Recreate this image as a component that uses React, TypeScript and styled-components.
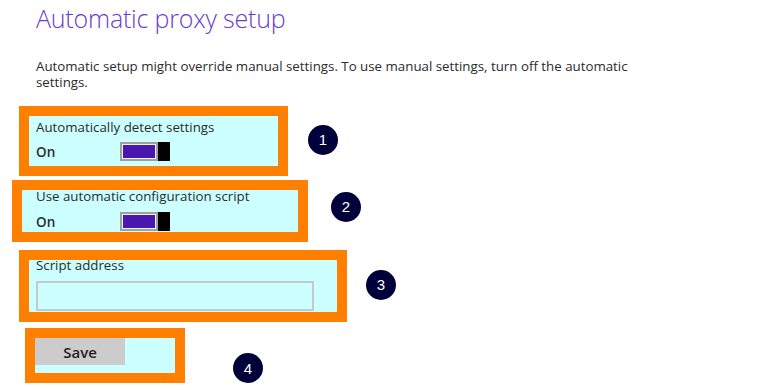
import React from 'react';
import styled, { createGlobalStyle } from 'styled-components';

const colors = {
    orange: '#ff8000',
    cyan: '#ccffff',
    purple: '#6a3dcc',
    toggle: '#4a16b0',
    text: '#2b2b2b',
    badge: '#00003a',
    grey: '#c8c8c8',
};

const GlobalStyle = createGlobalStyle`
    html, body {
        margin: 0;
        padding: 0;
        background: #ffffff;
    }
    body {
        font-family: "Open Sans", "Liberation Sans", sans-serif;
        color: ${colors.text};
    }
`

const Page = styled.div`
    width: 768px;
    height: 391px;
    overflow: hidden;
    display: flex;
    flex-direction: column;
`

const Title = styled.h1`
    margin: 3px 0 0 36px;
    font-size: 25px;
    font-weight: 300;
    line-height: 31px;
    color: ${colors.purple};
    letter-spacing: -0.2px;
`

const Intro = styled.p`
    margin: 24px 0 0 36px;
    width: 630px;
    font-size: 13.3px;
    line-height: 16px;
    color: ${colors.text};
`

const Row = styled.div<{ $top: number }>`
    display: flex;
    align-items: center;
    margin-top: ${p => p.$top}px;
`

const Highlight = styled.div<{ $left: number; $width: number }>`
    margin-left: ${p => p.$left}px;
    width: ${p => p.$width}px;
    border: 10px solid ${colors.orange};
    background: ${colors.cyan};
    box-sizing: content-box;
    overflow: hidden;
`

const Panel = styled.div<{ $padLeft: number; $height: number }>`
    height: ${p => p.$height}px;
    padding-left: ${p => p.$padLeft}px;
    box-sizing: border-box;
    display: flex;
    flex-direction: column;
`

const Label = styled.div<{ $top: number; $gap: number }>`
    margin-top: ${p => p.$top}px;
    margin-bottom: ${p => p.$gap}px;
    font-size: 13.3px;
    line-height: 18px;
    white-space: nowrap;
`

const SwitchRow = styled.div`
    display: flex;
    align-items: center;
    height: 19px;
`

const State = styled.span`
    width: 84px;
    font-size: 13.5px;
    font-weight: 600;
`

const Switch = styled.div`
    width: 50px;
    height: 19px;
    display: flex;
`

const Track = styled.div`
    flex: 1;
    border: 2px solid #a0a0a0;
    padding: 1px;
    background: #e8f8f8;
    display: flex;
`

const Fill = styled.div`
    flex: 1;
    background: ${colors.toggle};
`

const Thumb = styled.div`
    width: 12px;
    background: #000000;
`

const AddressInput = styled.div`
    width: 278px;
    height: 30px;
    border: 2px solid ${colors.grey};
    box-sizing: border-box;
`

const SaveButton = styled.div`
    width: 90px;
    height: 27px;
    background: #cccccc;
    display: flex;
    align-items: center;
    justify-content: center;
    font-size: 15px;
    font-weight: 600;
    color: #222222;
`

const Badge = styled.div<{ $gap: number; $offset: number }>`
    margin-left: ${p => p.$gap}px;
    margin-top: ${p => p.$offset * 2}px;
    width: 30px;
    height: 30px;
    border-radius: 50%;
    background: ${colors.badge};
    color: #ffffff;
    font-family: "Liberation Sans", Arial, sans-serif;
    font-size: 15px;
    display: flex;
    align-items: center;
    justify-content: center;
    flex-shrink: 0;
`

type ToggleProps = { label: string; on: boolean; top: number; gap: number }

const Toggle: React.FC<ToggleProps> = ({ label, on, top, gap }) => (
    <>
        <Label $top={top} $gap={gap}>{label}</Label>
        <SwitchRow>
            <State>{on ? 'On' : 'Off'}</State>
            <Switch>
                <Track><Fill /></Track>
                <Thumb />
            </Switch>
        </SwitchRow>
    </>
)

const App: React.FC = () => {
    return (
        <Page>
            <GlobalStyle />
            <Title>Automatic proxy setup</Title>
            <Intro>
                Automatic setup might override manual settings. To use manual settings, turn off the automatic settings.
            </Intro>

            <Row $top={16}>
                <Highlight $left={19} $width={249}>
                    <Panel $padLeft={7} $height={50}>
                        <Toggle label="Automatically detect settings" on top={2} gap={6} />
                    </Panel>
                </Highlight>
                <Badge $gap={20} $offset={-1.5}>1</Badge>
            </Row>

            <Row $top={4}>
                <Highlight $left={12} $width={276}>
                    <Panel $padLeft={14} $height={42}>
                        <Toggle label="Use automatic configuration script" on top={-3} gap={7} />
                    </Panel>
                </Highlight>
                <Badge $gap={23} $offset={-4.5}>2</Badge>
            </Row>

            <Row $top={8}>
                <Highlight $left={19} $width={308}>
                    <Panel $padLeft={7} $height={52}>
                        <Label $top={-4} $gap={7}>Script address</Label>
                        <AddressInput />
                    </Panel>
                </Highlight>
                <Badge $gap={19} $offset={-1.5}>3</Badge>
            </Row>

            <Row $top={6}>
                <Highlight $left={25} $width={140}>
                    <Panel $padLeft={0} $height={35}>
                        <SaveButton>Save</SaveButton>
                    </Panel>
                </Highlight>
                <Badge $gap={48} $offset={12.5}>4</Badge>
            </Row>
        </Page>
    );
}

export default App;
